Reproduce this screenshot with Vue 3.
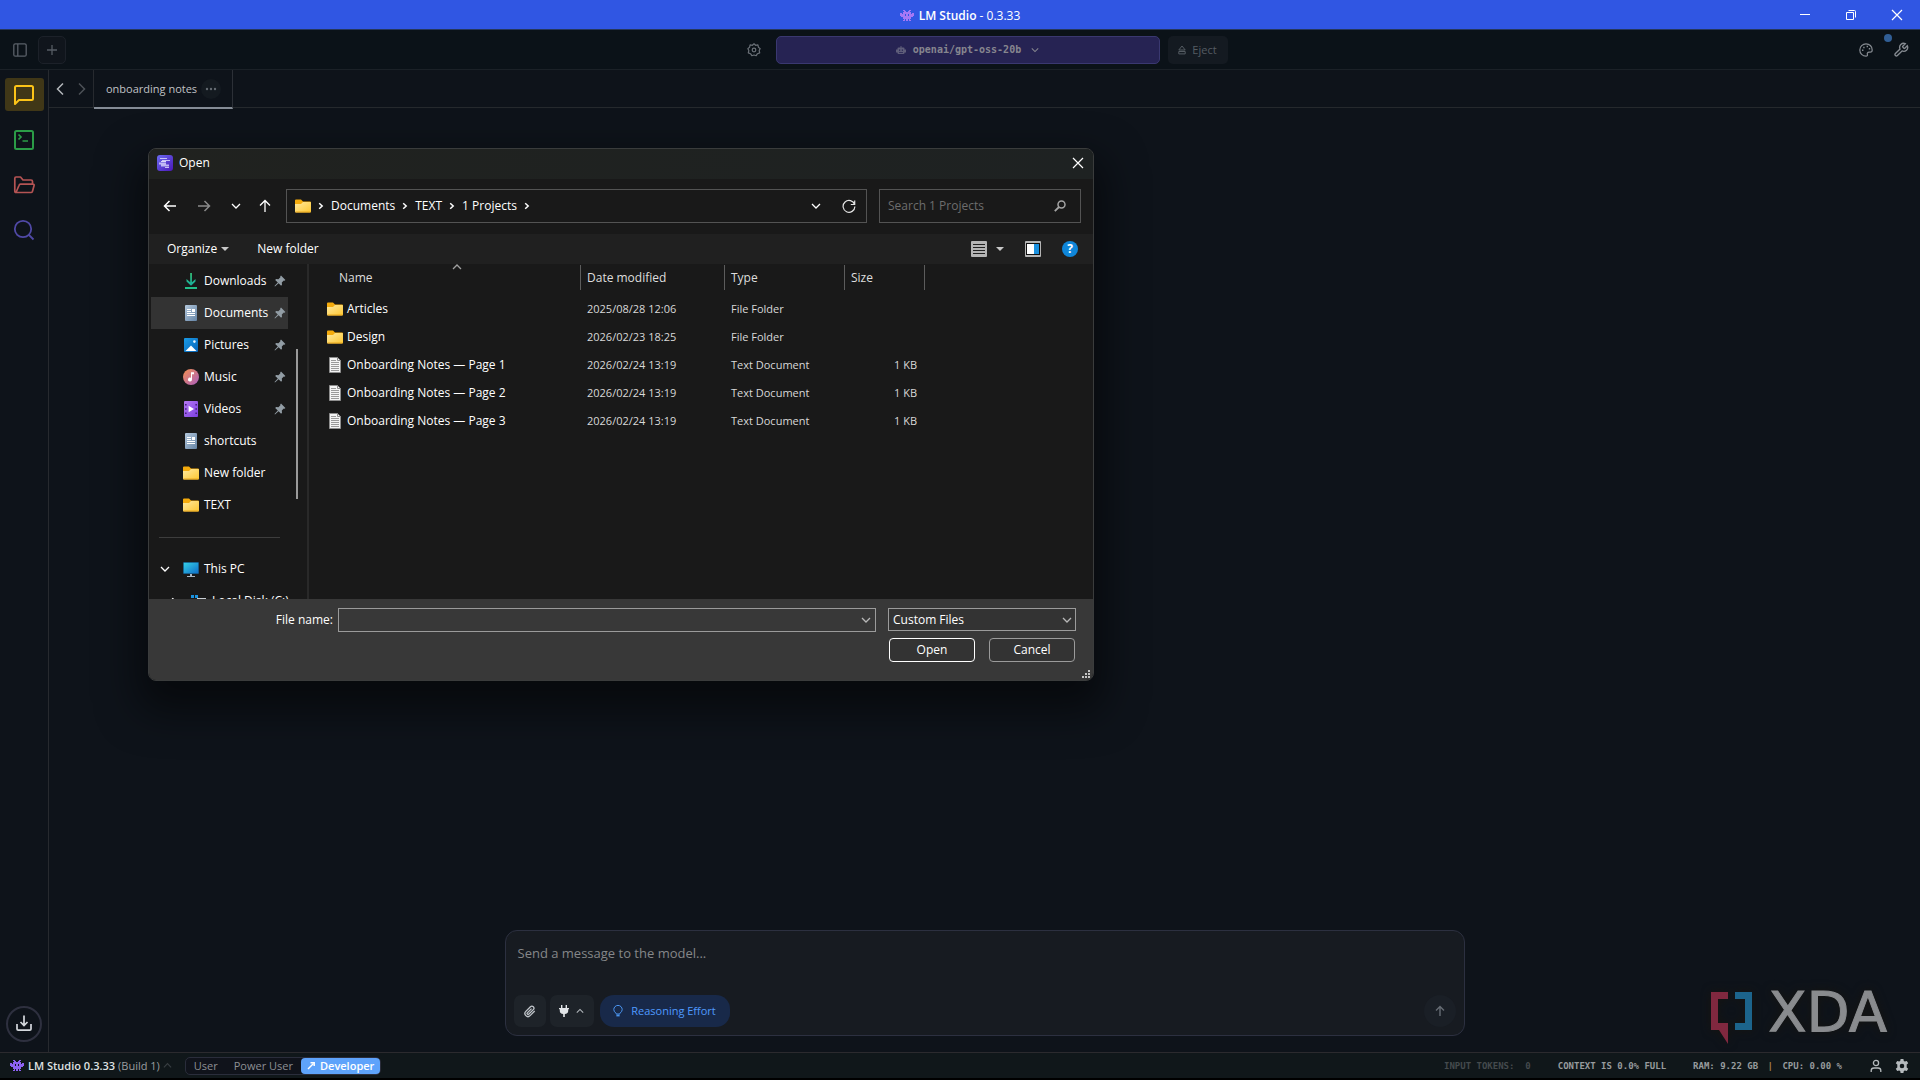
<script setup>
import { ref } from 'vue';

const fileName = ref('');
const search = ref('');
const message = ref('');
const fileType = ref('Custom Files');

const places = [
  { name: 'Downloads', icon: 'downloads', pinned: true },
  { name: 'Documents', icon: 'documents', pinned: true, active: true },
  { name: 'Pictures', icon: 'pictures', pinned: true },
  { name: 'Music', icon: 'music', pinned: true },
  { name: 'Videos', icon: 'videos', pinned: true },
  { name: 'shortcuts', icon: 'documents' },
  { name: 'New folder', icon: 'folder' },
  { name: 'TEXT', icon: 'folder' },
];

const files = [
  { name: 'Articles', icon: 'folder', date: '2025/08/28 12:06', type: 'File Folder', size: '' },
  { name: 'Design', icon: 'folder', date: '2026/02/23 18:25', type: 'File Folder', size: '' },
  { name: 'Onboarding Notes — Page 1', icon: 'text', date: '2026/02/24 13:19', type: 'Text Document', size: '1 KB' },
  { name: 'Onboarding Notes — Page 2', icon: 'text', date: '2026/02/24 13:19', type: 'Text Document', size: '1 KB' },
  { name: 'Onboarding Notes — Page 3', icon: 'text', date: '2026/02/24 13:19', type: 'Text Document', size: '1 KB' },
];

const crumbs = ['Documents', 'TEXT', '1 Projects'];
</script>

<template>
  <div class="app">
    <!-- Shared icons -->
    <svg class="sprite" width="0" height="0" aria-hidden="true">
      <defs>
        <linearGradient id="g-folder" x1="0" y1="0" x2="1" y2="1">
          <stop offset="0" stop-color="#ffe9a0" />
          <stop offset="1" stop-color="#fdc731" />
        </linearGradient>
        <linearGradient id="g-doc" x1="0" y1="0" x2="1" y2="1">
          <stop offset="0" stop-color="#b4c8dc" />
          <stop offset="1" stop-color="#6484a6" />
        </linearGradient>
        <linearGradient id="g-down" x1="0" y1="0" x2="0" y2="1">
          <stop offset="0" stop-color="#35c77b" />
          <stop offset="1" stop-color="#17ac9c" />
        </linearGradient>
        <linearGradient id="g-pic" x1="0" y1="0" x2="1" y2="1">
          <stop offset="0" stop-color="#1a9be6" />
          <stop offset="1" stop-color="#0864b8" />
        </linearGradient>
        <linearGradient id="g-music" x1="0" y1="0" x2="1" y2="1">
          <stop offset="0" stop-color="#f59150" />
          <stop offset="1" stop-color="#a85cc0" />
        </linearGradient>
        <linearGradient id="g-video" x1="0" y1="0" x2="1" y2="1">
          <stop offset="0" stop-color="#b578f2" />
          <stop offset="1" stop-color="#7b3fe0" />
        </linearGradient>
        <linearGradient id="g-pc" x1="0" y1="0" x2="1" y2="1">
          <stop offset="0" stop-color="#35d0e6" />
          <stop offset="1" stop-color="#0f6fc9" />
        </linearGradient>
        <linearGradient id="g-app" x1="0" y1="0" x2="1" y2="1">
          <stop offset="0" stop-color="#6b6bf0" />
          <stop offset="1" stop-color="#4a17b8" />
        </linearGradient>
      </defs>
      <symbol id="i-folder" viewBox="0 0 16 16">
        <path d="M0 2.500Q0 1.500 1 1.500H6L8 3.500H15Q16 3.500 16 4.500V7H0Z" fill="#f5ab0c" />
        <path d="M0 6H6L8 4H15.200Q16 4 16 5V13.500Q16 14.500 15 14.500H1Q0 14.500 0 13.500Z" fill="url(#g-folder)" />
        <path d="M.5 14H15.500" stroke="#e9a61c" />
      </symbol>
      <symbol id="i-text" viewBox="0 0 16 16">
        <path d="M2.500 .5H10.500L13.500 3.500V15.500H2.500Z" fill="#f4f4f4" stroke="#8e8e8e" />
        <path d="M10.500 .5V3.500H13.500" fill="none" stroke="#8e8e8e" />
        <path d="M4 3.500H9M4 5.500H12M4 7.500H12M4 9.500H12M4 11.500H12M4 13.500H12" stroke="#9a9a9a" />
      </symbol>
      <symbol id="i-documents" viewBox="0 0 16 16">
        <rect x="2" width="12" height="16" rx="1" fill="url(#g-doc)" />
        <path d="M4 4.500H8M4 6.500H8M4 8.500H12M4 10.500H12" stroke="#fff" />
        <rect x="9" y="4" width="3" height="3" fill="#fff" />
      </symbol>
      <symbol id="i-downloads" viewBox="0 0 16 16">
        <path d="M7.200 0h1.700v9.200l3.600-3.200v2.500L8 12.800 3.500 8.500V6l3.700 3.200Z" fill="url(#g-down)" />
        <rect x="2" y="14" width="12" height="2" fill="#22c08a" />
      </symbol>
      <symbol id="i-pictures" viewBox="0 0 16 16">
        <rect x="1" y="1" width="14" height="14" rx="1" fill="url(#g-pic)" />
        <path d="M2.500 14 8 8.400 13.500 14Z" fill="#fff" />
        <circle cx="11.400" cy="4.600" r="1.300" fill="#e8f4ff" />
      </symbol>
      <symbol id="i-music" viewBox="0 0 16 16">
        <circle cx="8" cy="8" r="8" fill="url(#g-music)" />
        <path d="M8 3.200h3v2H9v5.400a2 2 0 1 1-1-1.800Z" fill="#fff" />
      </symbol>
      <symbol id="i-videos" viewBox="0 0 16 16">
        <rect x="1" width="14" height="16" rx="1" fill="url(#g-video)" />
        <path d="M2 3h1.600v1.600H2ZM2 7.200h1.600v1.600H2ZM2 11.400h1.600V13H2ZM12.400 3H14v1.600h-1.600ZM12.400 7.200H14v1.600h-1.600ZM12.400 11.400H14V13h-1.600Z" fill="#45207e" />
        <path d="M5.600 4.800 11 8l-5.400 3.200Z" fill="#fff" />
      </symbol>
      <symbol id="i-pc" viewBox="0 0 16 16">
        <rect y="1" width="16" height="12" rx="1" fill="#14527e" />
        <rect x=".8" y="1.800" width="14.400" height="10.400" fill="url(#g-pc)" />
        <path d="M7 13h2v2h3v1H4v-1h3Z" fill="#a9b6c2" />
      </symbol>
      <symbol id="i-disk" viewBox="0 0 16 16">
        <path d="M6 5h9v6H1V7h5Z" fill="#c8ced3" />
        <path d="M0 2h3v3H0ZM4 2h3v3H4ZM0 6h3v2H0ZM4 6h3v2H4Z" fill="#1a93e0" />
      </symbol>
      <symbol id="i-pin" viewBox="0 0 12 12">
        <path d="M7 .6 11.400 5l-.8.8-.8-.2-2 2 .2 2.200-.9.900L4.600 8.200 1 11.400l-.5-.5L3.800 7.400 1.200 5l.9-.9 2.300.2 2-2-.2-.9Z" fill="#929da5" />
      </symbol>
      <symbol id="i-chevron" viewBox="0 0 10 10">
        <path d="M1 3l4 4 4-4" fill="none" stroke="currentColor" stroke-width="1.300" />
      </symbol>
      <symbol id="i-next" viewBox="0 0 6 8">
        <path d="M1.200 1.200 4.200 4 1.200 6.800" fill="none" stroke="currentColor" stroke-width="1.500" />
      </symbol>
      <symbol id="i-close" viewBox="0 0 12 12">
        <path d="M1 1l10 10M11 1 1 11" fill="none" stroke="currentColor" stroke-width="1.200" />
      </symbol>
      <symbol id="i-invader" viewBox="0 0 14 12">
        <path
          d="M3 0h2v1h1v1h2V1h1V0h2v1h-1v1h1v2h1V3h2v3h-1v1h-2v2h-1v1h1v1H9V9H8v2H6V9H5v2H3v-1h1V9H3V7H1V6H0V3h2v1h1V2h1V1H3ZM5 4v2h1V4ZM8 4v2h1V4Z"
          fill="currentColor"
          fill-rule="evenodd"
        />
      </symbol>
    </svg>

    <header class="titlebar">
      <div class="titlebar-name">
        <svg class="invader" width="14" height="12"><use href="#i-invader" /></svg>
        <span><b>LM Studio</b> - 0.3.33</span>
      </div>
      <div class="window-controls">
        <button aria-label="Minimize">
          <svg width="12" height="12"><path d="M1 5.500h10" stroke="#fff" /></svg>
        </button>
        <button aria-label="Restore">
          <svg width="12" height="12" fill="none" stroke="#fff">
            <path d="M1.500 3.500h7v7h-7ZM3.500 1.500h6q1 0 1 1v6" />
          </svg>
        </button>
        <button aria-label="Close">
          <svg width="12" height="12" color="#fff"><use href="#i-close" /></svg>
        </button>
      </div>
    </header>

    <div class="toolbar">
      <div class="toolbar-left">
        <button class="icon-button" aria-label="Toggle sidebar">
          <svg width="14" height="14" fill="none" stroke="#5a6068" stroke-width="1.300">
            <rect x=".8" y=".8" width="12.400" height="12.400" rx="1.500" />
            <path d="M4.800 1v12" />
          </svg>
        </button>
        <button class="new-button" aria-label="New chat">
          <svg width="12" height="12" stroke="#565c64" stroke-width="1.300"><path d="M6 1v10M1 6h10" /></svg>
        </button>
      </div>
      <div class="toolbar-center">
        <button class="icon-button" aria-label="Model settings">
          <svg width="14" height="14" viewBox="0 0 14 14" fill="none" stroke="#6a7077" stroke-width="1.200">
            <path d="M7 .8 8.600 2.300 10.900 1.900 11.400 4.200 13.200 5.600 12.200 7.600 12.700 9.900 10.500 10.700 9.200 12.700 7 12 4.800 12.700 3.500 10.700 1.300 9.900 1.800 7.600 .8 5.600 2.600 4.200 3.100 1.900 5.400 2.300Z" stroke-linejoin="round" />
            <circle cx="7" cy="7" r="1.800" />
          </svg>
        </button>
        <button class="model-button">
          <svg width="10" height="10" viewBox="0 0 10 10" fill="#5e5d7a">
            <path d="M4.500 1h1v1.500h2q1 0 1 1V4.500h1.500v3H8.500V8q0 1-1 1h-5q-1 0-1-1v-.5H0v-3h1.500v-1q0-1 1-1h2ZM3 4.500v1.200h1.200V4.500ZM5.800 4.500v1.200H7V4.500ZM3 7v.8h4V7Z" fill-rule="evenodd" />
          </svg>
          <span>openai/gpt-oss-20b</span>
          <svg width="8" height="8"><use href="#i-chevron" /></svg>
        </button>
        <button class="eject-button">
          <svg width="8" height="10" viewBox="0 0 8 10" fill="none" stroke="#555c63">
            <path d="M4 1 7.200 5H.8ZM.8 6.500h6.400v2.400H.8Z" />
          </svg>
          Eject
        </button>
      </div>
      <div class="toolbar-right">
        <button class="icon-button" aria-label="Theme">
          <svg width="14" height="14" viewBox="0 0 14 14" fill="none" stroke="#868b91" stroke-width="1.200">
            <path d="M7 .8a6.200 6.200 0 0 0 0 12.400c1.300 0 1.700-.8 1.400-1.700-.5-1.400.3-2.300 1.600-2.300h1.300c1.200 0 1.900-1 1.900-2.200C13.200 3.400 10.400 .8 7 .8Z" />
            <path d="M3 7.200h1.400M4.200 4.400h1.400M7.600 3.600h1.400M9.800 5.800h1.400" stroke-width="1.500" />
          </svg>
        </button>
        <button class="icon-button wrench" aria-label="Tools">
          <svg width="16" height="16" viewBox="0 0 24 24" fill="none" stroke="#868b91" stroke-width="2">
            <path d="M14.700 6.300a1 1 0 0 0 0 1.400l1.600 1.600a1 1 0 0 0 1.400 0l3.770-3.770a6 6 0 0 1-7.940 7.940l-6.910 6.910a2.120 2.120 0 0 1-3-3l6.910-6.910a6 6 0 0 1 7.940-7.940z" />
          </svg>
          <span class="dot"></span>
        </button>
      </div>
    </div>

    <div class="body">
      <nav class="rail">
        <button class="rail-item active" aria-label="Chat">
          <svg width="22" height="22" viewBox="0 0 22 22" fill="none" stroke="#fcc418" stroke-width="2">
            <path d="M2 20V3.500Q2 2 3.500 2h15Q20 2 20 3.500v11q0 1.500-1.500 1.500H6Z" stroke-linejoin="round" />
          </svg>
        </button>
        <button class="rail-item" aria-label="Developer">
          <svg width="22" height="22" viewBox="0 0 22 22" fill="none" stroke="#2b9c47" stroke-width="2">
            <rect x="2" y="2" width="18" height="18" rx="1.500" />
            <path d="M5.500 5.500 8 8 5.500 10.500M9.500 12h5.500" stroke-width="1.700" />
          </svg>
        </button>
        <button class="rail-item" aria-label="My models">
          <svg width="22" height="22" viewBox="0 0 22 22" fill="none" stroke="#b55454" stroke-width="1.700" stroke-linejoin="round">
            <path d="M3 18.500Q1.800 18.500 1.800 17V4.500Q1.800 3 3 3h4.500l2.500 3h8q1.500 0 1.500 1.500V10M3 18.500l3-7Q6.400 10.200 7.500 10.200h12.300q1.700 0 1.200 1.500l-1.500 5.500q-.4 1.300-1.600 1.300Z" />
          </svg>
        </button>
        <button class="rail-item" aria-label="Discover">
          <svg width="22" height="22" viewBox="0 0 22 22" fill="none" stroke="#5049a6" stroke-width="1.800">
            <circle cx="10" cy="10" r="8.200" />
            <path d="M15.500 15.500 20.500 20.500" />
          </svg>
        </button>
        <button class="download-button" aria-label="Downloads">
          <svg width="18" height="18" viewBox="0 0 18 18" fill="none" stroke="#d5d9de" stroke-width="1.700">
            <path d="M9 .5v10M5.500 7l3.500 3.500L12.500 7M2 9v5q0 1.200 1.200 1.200h11.600Q16 15.200 16 14V9" />
          </svg>
        </button>
      </nav>

      <main class="main">
        <div class="tabs">
          <div class="tab-nav">
            <button aria-label="Back"><svg width="8" height="14" fill="none" stroke="#b4b8bc" stroke-width="1.500"><path d="M7 1.500 1.500 7 7 12.500" /></svg></button>
            <button aria-label="Forward"><svg width="8" height="14" fill="none" stroke="#4c5157" stroke-width="1.500"><path d="M1 1.500 6.500 7 1 12.500" /></svg></button>
          </div>
          <div class="tab">
            <span>onboarding notes</span>
            <button class="tab-more" aria-label="Tab options">
              <svg width="12" height="4" fill="#666c73"><circle cx="2" cy="2" r="1.200" /><circle cx="6" cy="2" r="1.200" /><circle cx="10" cy="2" r="1.200" /></svg>
            </button>
          </div>
        </div>

        <div class="chat">
          <form class="composer" @submit.prevent>
            <textarea v-model="message" rows="1" aria-label="Message" placeholder="Send a message to the model..."></textarea>
            <div class="composer-actions">
              <button type="button" class="chip attach" aria-label="Attach file">
                <svg width="12" height="13" viewBox="0 0 24 24" fill="none" stroke="#c0c5ca" stroke-width="2.600">
                  <path d="M21.400 11.100l-9.200 9.200a6 6 0 0 1-8.500-8.500l9.200-9.200a4 4 0 0 1 5.700 5.700l-9.200 9.200a2 2 0 0 1-2.800-2.800l8.500-8.500" />
                </svg>
              </button>
              <button type="button" class="chip plug" aria-label="Integrations">
                <svg width="10" height="12" viewBox="0 0 10 12" fill="#e2e5e8">
                  <path d="M2 0h1.400v3h3.200V0H8v3h2v1.200H9.200V6Q9.200 8.500 5.800 9v3H4.200V9Q.8 8.500 .8 6V4.200H0V3h2Z" />
                </svg>
                <svg class="flip" width="8" height="8"><use href="#i-chevron" /></svg>
              </button>
              <button type="button" class="reasoning">
                <svg width="10" height="12" viewBox="0 0 10 12" fill="none" stroke="#4b95f0">
                  <path d="M3.200 9V8.400Q.8 6.800 .8 4.600a4.200 4.200 0 0 1 8.400 0Q9.200 6.800 6.800 8.400V9Z" />
                  <path d="M3.400 10.500h3.200" stroke-width="1.800" />
                </svg>
                Reasoning Effort
              </button>
              <button type="submit" class="send" aria-label="Send">
                <svg width="10" height="12" fill="none" stroke="#666c74" stroke-width="1.400"><path d="M5 11V1.500M1 5.500l4-4 4 4" /></svg>
              </button>
            </div>
          </form>
        </div>

        <div class="watermark">
          <svg width="44" height="54" viewBox="0 0 44 54">
            <path d="M1 1H18V8H8V32H18V53L9 39H1Z" fill="#80283f" />
            <path d="M25 1H42V39H25V32H35V8H25Z" fill="#1c648c" />
          </svg>
          <span>XDA</span>
        </div>
      </main>
    </div>

    <footer class="statusbar">
      <svg class="status-logo" width="14" height="12"><use href="#i-invader" /></svg>
      <b>LM Studio 0.3.33</b>
      <span class="build">(Build 1)</span>
      <svg class="flip faint" width="9" height="9"><use href="#i-chevron" /></svg>
      <div class="modes">
        <button>User</button>
        <button>Power User</button>
        <button class="selected">
          <svg width="9" height="9" fill="none" stroke="#fff" stroke-width="1.500"><path d="M1 8 6.500 2.500" /><path d="M3.500 1.800H7.200V5" /></svg>
          Developer
        </button>
      </div>
      <div class="stats">
        <span class="tokens">INPUT TOKENS: &nbsp;0</span>
        <span class="context">CONTEXT IS 0.0% FULL</span>
        <span class="system">RAM: 9.22 GB <i>|</i> CPU: 0.00 %</span>
      </div>
      <button class="status-icon" aria-label="Account">
        <svg width="12" height="14" fill="none" stroke="#b5babd" stroke-width="1.300">
          <circle cx="6" cy="4" r="2.600" />
          <path d="M1.200 13V11.500Q1.200 9 4 9h4q2.800 0 2.800 2.500V13" />
        </svg>
      </button>
      <button class="status-icon" aria-label="Settings">
        <svg width="14" height="14" viewBox="0 0 14 14" fill="#b5babd">
          <path d="M5.600 0h2.800l.4 1.900 1.100.6 1.900-.6 1.400 2.400-1.500 1.300v2.800l1.500 1.300-1.400 2.400-1.900-.6-1.100.6L8.400 14H5.600l-.4-1.900-1.100-.6-1.900.6L.8 9.700l1.500-1.300V5.600L.8 4.300 2.200 1.900l1.900.6 1.100-.6ZM7 4.700a2.300 2.300 0 1 0 0 4.600 2.300 2.300 0 0 0 0-4.600Z" fill-rule="evenodd" />
        </svg>
      </button>
    </footer>

    <!-- File picker window -->
    <section class="dialog" role="dialog" aria-label="Open">
      <header class="dialog-title">
        <svg width="16" height="16" fill="none" stroke="#d9d6fb">
          <rect width="16" height="16" rx="3" fill="url(#g-app)" stroke="none" />
          <path d="M3 3.500h7M5 5.500h8M8 12.500h4" opacity=".85" />
          <path d="M2 8.500h7M4 10.500h8" stroke-width="2" opacity=".8" />
          <path d="M4 6.500h5" />
        </svg>
        <span>Open</span>
        <button aria-label="Close dialog"><svg width="12" height="12"><use href="#i-close" /></svg></button>
      </header>

      <div class="dialog-nav">
        <div class="nav-buttons">
          <button aria-label="Back"><svg width="14" height="14" fill="none" stroke="#fff" stroke-width="1.500"><path d="M13 7H1.500M6.500 2l-5 5 5 5" /></svg></button>
          <button aria-label="Forward"><svg width="14" height="14" fill="none" stroke="#8a8a8a" stroke-width="1.500"><path d="M1 7h11.500M7.500 2l5 5-5 5" /></svg></button>
          <button aria-label="Recent"><svg width="10" height="10"><use href="#i-chevron" /></svg></button>
          <button aria-label="Up"><svg width="14" height="14" fill="none" stroke="#fff" stroke-width="1.300"><path d="M7 13V1.500M2 6.500l5-5 5 5" /></svg></button>
        </div>
        <div class="address">
          <svg width="16" height="16"><use href="#i-folder" /></svg>
          <svg width="6" height="8"><use href="#i-next" /></svg>
          <template v-for="crumb in crumbs" :key="crumb">
            <button>{{ crumb }}</button>
            <svg width="6" height="8"><use href="#i-next" /></svg>
          </template>
          <button class="address-drop" aria-label="Previous locations"><svg width="10" height="10"><use href="#i-chevron" /></svg></button>
          <button aria-label="Refresh">
            <svg width="14" height="14" fill="none" stroke="#e4e4e4" stroke-width="1.200"><path d="M12.600 5.500A5.900 5.900 0 1 0 12.900 7.500M12.700 1.500V5.500H8.800" /></svg>
          </button>
        </div>
        <label class="search">
          <input v-model="search" type="text" aria-label="Search 1 Projects" placeholder="Search 1 Projects" />
          <svg width="12" height="12" fill="none" stroke="#a4a4a4" stroke-width="1.500"><circle cx="7.500" cy="4.500" r="3.500" /><path d="M5 7 .8 11.200" stroke-width="1.800" /></svg>
        </label>
      </div>

      <div class="dialog-tools">
        <button>Organize <i class="triangle"></i></button>
        <button>New folder</button>
        <div class="view-tools">
          <button aria-label="View">
            <svg width="16" height="16"><rect width="16" height="16" rx="1" fill="#b4b4b4" /><path d="M2 3.500h12M2 6.500h12M2 9.500h12M2 12.500h12" stroke="#202020" /></svg>
            <i class="triangle"></i>
          </button>
          <button aria-label="Preview pane">
            <svg width="16" height="16"><rect width="16" height="16" rx="1" fill="#b4b4b4" /><rect x="1.500" y="2.500" width="13" height="11" fill="#fff" stroke="#111" /><rect x="9" y="3" width="5" height="10" fill="#1a90de" /></svg>
          </button>
          <button class="help" aria-label="Help">?</button>
        </div>
      </div>

      <div class="dialog-content">
        <aside class="places">
          <ul>
            <li v-for="place in places" :key="place.name" :class="{ active: place.active }">
              <svg width="16" height="16"><use :href="'#i-' + place.icon" /></svg>
              <span>{{ place.name }}</span>
              <svg v-if="place.pinned" class="pin" width="12" height="12"><use href="#i-pin" /></svg>
            </li>
            <li class="separator"><hr /></li>
            <li class="pc">
              <svg width="10" height="10"><use href="#i-chevron" /></svg>
              <svg width="16" height="16"><use href="#i-pc" /></svg>
              <span>This PC</span>
            </li>
            <li class="disk">
              <svg width="6" height="8"><use href="#i-next" /></svg>
              <svg width="16" height="16"><use href="#i-disk" /></svg>
              <span>Local Disk (C:)</span>
            </li>
          </ul>
          <div class="scrollbar"></div>
        </aside>

        <div class="listing">
          <svg class="sort" width="10" height="10"><use href="#i-chevron" /></svg>
          <table>
            <colgroup>
              <col class="c-name" />
              <col class="c-date" />
              <col class="c-type" />
              <col class="c-size" />
            </colgroup>
            <thead>
              <tr>
                <th><div>Name</div></th>
                <th><div>Date modified</div></th>
                <th><div>Type</div></th>
                <th><div>Size</div></th>
              </tr>
            </thead>
            <tbody>
              <tr v-for="file in files" :key="file.name">
                <td>
                  <div class="file">
                    <svg width="16" height="16"><use :href="'#i-' + file.icon" /></svg>
                    {{ file.name }}
                  </div>
                </td>
                <td>{{ file.date }}</td>
                <td>{{ file.type }}</td>
                <td class="size">{{ file.size }}</td>
              </tr>
            </tbody>
          </table>
        </div>
      </div>

      <form class="dialog-footer" @submit.prevent>
        <div class="fields">
          <label for="file-name">File name:</label>
          <div class="combo">
            <input id="file-name" v-model="fileName" type="text" />
            <button type="button" aria-label="Show recent files"><svg width="10" height="10"><use href="#i-chevron" /></svg></button>
          </div>
          <div class="select">
            <select v-model="fileType" aria-label="File type">
              <option>Custom Files</option>
            </select>
            <svg width="10" height="10"><use href="#i-chevron" /></svg>
          </div>
        </div>
        <div class="buttons">
          <button type="submit" class="primary">Open</button>
          <button type="button">Cancel</button>
        </div>
        <svg class="grip" width="8" height="8" fill="#c4c4c4">
          <path d="M6 0h2v2H6ZM6 3h2v2H6ZM6 6h2v2H6ZM3 3h2v2H3ZM3 6h2v2H3ZM0 6h2v2H0Z" />
        </svg>
      </form>
    </section>
  </div>
</template>

<style>
body {
  margin: 0;
  background: #000;
}
</style>

<style scoped>
* {
  box-sizing: border-box;
}

.app {
  position: relative;
  display: flex;
  flex-direction: column;
  min-height: 100vh;
  padding-bottom: 2px;
  font: 12px/16px 'Open Sans', 'Noto Sans', sans-serif;
  color: #fff;
  background: #000;
}

svg {
  display: block;
  flex: none;
}

.sprite {
  position: absolute;
}

button,
input,
select,
textarea {
  margin: 0;
  padding: 0;
  border: 0;
  background: none;
  color: inherit;
  font: inherit;
}

button {
  display: flex;
  align-items: center;
  justify-content: center;
  white-space: nowrap;
}

/* Title bar */
.titlebar {
  display: grid;
  grid-template-columns: 1fr auto 1fr;
  align-items: center;
  height: 30px;
  background: #3056e3;
  border-bottom: 1px solid #26375c;
}

.titlebar-name {
  grid-column: 2;
  display: flex;
  align-items: center;
  gap: 5px;
  padding-top: 2px;
}

.titlebar-name b {
  font-weight: 600;
}

.invader {
  color: #a478f5;
}

.window-controls {
  display: flex;
  justify-content: flex-end;
}

.window-controls button {
  width: 46px;
  height: 29px;
}

/* Toolbar */
.toolbar {
  display: grid;
  grid-template-columns: 1fr auto 1fr;
  align-items: center;
  height: 40px;
  background: #0b1218;
  border-bottom: 1px solid #1b2127;
}

.toolbar-left {
  display: flex;
  align-items: center;
  gap: 11px;
  padding-left: 13px;
}

.new-button {
  width: 28px;
  height: 28px;
  border: 1px solid #1c2129;
  border-radius: 5px;
  background: #10151c;
}

.toolbar-center {
  display: flex;
  align-items: center;
  gap: 8px;
  margin-left: 54px;
}

.model-button {
  gap: 7px;
  width: 384px;
  height: 28px;
  margin-left: 7px;
  border: 1px solid #3a3870;
  border-radius: 5px;
  background: #262353;
  color: #86868f;
  font: bold 10px/16px 'DejaVu Sans Mono', monospace;
}

.model-button span {
  margin-right: 3px;
}

.eject-button {
  gap: 6px;
  width: 60px;
  height: 28px;
  border-radius: 5px;
  background: #141a21;
  color: #555c63;
  font-size: 11px;
}

.toolbar-right {
  display: flex;
  align-items: center;
  justify-content: flex-end;
  gap: 20px;
  padding-right: 11px;
}

.wrench {
  position: relative;
}

.dot {
  position: absolute;
  top: -8px;
  left: -9px;
  width: 8px;
  height: 8px;
  border-radius: 50%;
  background: #315e95;
}

/* Left rail */
.body {
  display: flex;
  flex: 1;
  background: #0e131a;
}

.rail {
  display: flex;
  flex-direction: column;
  align-items: center;
  gap: 12px;
  width: 49px;
  padding: 8px 0 10px;
  border-right: 1px solid #272a2f;
}

.rail-item {
  width: 39px;
  height: 33px;
  border-radius: 3px;
}

.rail-item.active {
  background: #403717;
}

.download-button {
  width: 36px;
  height: 36px;
  margin-top: auto;
  border: 2px solid #2e303f;
  border-radius: 50%;
}

/* Main area */
.main {
  position: relative;
  display: flex;
  flex: 1;
  flex-direction: column;
}

.tabs {
  display: flex;
  height: 38px;
  border-bottom: 1px solid #25292d;
}

.tab-nav {
  display: flex;
  align-items: center;
  justify-content: space-between;
  width: 45px;
  padding: 0 7px;
  border-right: 1px solid #272a2f;
}

.tab {
  display: flex;
  align-items: center;
  gap: 4px;
  height: 39px;
  padding: 0 11px 0 12px;
  border-right: 1px solid #2c3037;
  border-bottom: 2px solid #858c96;
  color: #c0c2c5;
  font-size: 11px;
  font-weight: 500;
}

.tab-more {
  width: 20px;
  height: 20px;
  border-radius: 50%;
  background: #141a20;
}

.chat {
  display: flex;
  flex: 1;
  align-items: flex-end;
  justify-content: center;
  padding: 0 16px 16px;
}

.composer {
  width: 960px;
  padding: 12px 8px 8px;
  border: 1px solid #2c3040;
  border-radius: 12px;
  background: #171b21;
}

.composer textarea {
  display: block;
  width: 100%;
  height: 32px;
  margin-bottom: 20px;
  padding: 0 4px;
  color: #d0d4d8;
  font-size: 13px;
  line-height: 20px;
  resize: none;
}

.composer textarea::placeholder {
  color: #858789;
  opacity: 1;
}

.composer-actions {
  display: flex;
  align-items: center;
  gap: 6px;
}

.chip {
  height: 32px;
  border-radius: 7px;
  background: #1e2329;
}

.attach {
  width: 32px;
  margin-right: -2px;
}

.plug {
  gap: 7px;
  width: 44px;
  color: #b4b9be;
}

.flip {
  transform: rotate(180deg);
}

.reasoning {
  gap: 8px;
  width: 130px;
  height: 32px;
  border-radius: 14px;
  background: #182949;
  color: #4f9aff;
  font-size: 11px;
  font-weight: 500;
}

.send {
  width: 32px;
  height: 32px;
  margin-left: auto;
  border-radius: 50%;
  background: #1a1f26;
}

.watermark {
  position: absolute;
  right: 33px;
  bottom: 7px;
  display: flex;
  gap: 14px;
  color: #898b8e;
  font: 56px/42px 'DejaVu Sans', sans-serif;
  -webkit-text-stroke: 1px #898b8e;
  filter: drop-shadow(0 0 5px #16140f);
}

/* Status bar */
.statusbar {
  display: flex;
  align-items: center;
  height: 26px;
  padding: 0 11px 0 10px;
  border-top: 1px solid #2b2a2e;
  background: #10171a;
  font-size: 11px;
  white-space: nowrap;
}

.status-logo {
  margin-right: 4px;
  color: #8d62f2;
}

.statusbar b {
  color: #dfe1e2;
  font-weight: 600;
}

.build {
  margin: 0 3px;
  color: #9a9d9f;
}

.faint {
  color: #383e42;
}

.modes {
  display: flex;
  margin-left: 13px;
  border: 1px solid #2a2d3b;
  border-radius: 5px;
  background: #10131b;
  color: #8d8f94;
}

.modes button {
  padding: 0 8px;
}

.modes .selected {
  gap: 4px;
  padding: 0 6px;
  border-radius: 4px;
  background: #5ea3fb;
  color: #fff;
  font-weight: 600;
}

.stats {
  display: flex;
  gap: 27px;
  margin: 0 28px 0 auto;
  font: bold 9px/16px 'DejaVu Sans Mono', monospace;
}

.tokens {
  color: #444a4d;
}

.context,
.system {
  color: #979b9d;
}

.system i {
  margin: 0 4px;
  font-style: normal;
  color: #a8834d;
}

.status-icon + .status-icon {
  margin-left: 13px;
}

/* File picker */
.dialog {
  position: absolute;
  top: 148px;
  left: 148px;
  display: flex;
  flex-direction: column;
  width: 946px;
  overflow: hidden;
  border: 1px solid #3a3c3c;
  border-radius: 8px;
  background: #191919;
  box-shadow: 0 20px 40px 10px rgba(0, 0, 0, 0.5);
}

.dialog-title {
  display: flex;
  align-items: center;
  gap: 6px;
  height: 30px;
  padding: 0 9px 2px 8px;
  background: linear-gradient(90deg, #20221f, #1e2222);
}

.dialog-title button {
  margin-left: auto;
}

.dialog-nav {
  display: flex;
  align-items: center;
  gap: 12px;
  height: 55px;
  padding: 0 12px 1px 14px;
}

.nav-buttons {
  display: flex;
  align-items: center;
  gap: 20px;
  width: 111px;
}

.nav-buttons button:nth-child(4) {
  margin-left: -3px;
}

.address {
  display: flex;
  flex: 1;
  align-items: center;
  gap: 7px;
  height: 34px;
  padding: 0 10px 0 8px;
  border: 1px solid #535353;
}

.address-drop {
  margin: 0 14px 0 auto;
}

.search {
  display: flex;
  align-items: center;
  width: 202px;
  height: 34px;
  padding: 0 14px 0 8px;
  border: 1px solid #535353;
}

.search input {
  flex: 1;
  min-width: 0;
}

.search input::placeholder {
  color: #6d6d6d;
  opacity: 1;
}

.dialog-tools {
  display: flex;
  align-items: center;
  gap: 28px;
  height: 30px;
  padding: 0 15px 0 18px;
  background: #202020;
}

.dialog-tools button {
  gap: 4px;
}

.triangle {
  border: 4px solid transparent;
  border-top-color: #c8c8c8;
  border-bottom: 0;
}

.view-tools {
  display: flex;
  gap: 21px;
  margin-left: auto;
}

.view-tools button {
  gap: 9px;
}

.dialog-tools .help {
  width: 16px;
  height: 16px;
  border-radius: 50%;
  background: #0f86d9;
  font-weight: 700;
}

.dialog-content {
  display: flex;
  height: 335px;
  overflow: hidden;
}

.places {
  display: flex;
  width: 160px;
  padding: 1px 2px 0;
  border-right: 2px solid #292929;
}

.places ul {
  width: 137px;
  margin: 0;
  padding: 0;
  list-style: none;
  white-space: nowrap;
}

.places li {
  display: flex;
  align-items: center;
  gap: 5px;
  height: 32px;
  padding: 0 2px 0 32px;
}

.places li.active {
  background: #333;
}

.pin {
  margin-left: auto;
}

.places .separator {
  padding: 0 8px;
}

.separator hr {
  flex: 1;
  margin: 0;
  border: 0;
  border-top: 1px solid #3d3d3d;
}

.places .pc {
  padding-left: 9px;
}

.pc svg:first-child {
  margin-right: 8px;
}

.places .disk {
  padding-left: 20px;
}

.disk svg:first-child {
  margin-right: 9px;
}

.scrollbar {
  width: 2px;
  height: 150px;
  margin: 84px 0 0 8px;
  background: #9a9a9a;
}

.listing {
  position: relative;
  flex: 1;
  padding-top: 1px;
}

.sort {
  position: absolute;
  top: -2px;
  left: 143px;
  color: #a0a0a0;
  transform: rotate(180deg);
}

table {
  table-layout: fixed;
  width: 616px;
  border-collapse: collapse;
}

.c-name {
  width: 272px;
}

.c-date {
  width: 144px;
}

.c-type {
  width: 120px;
}

.c-size {
  width: 80px;
}

th {
  height: 30px;
  padding: 0;
  color: #dedede;
  font-weight: 400;
  text-align: left;
  vertical-align: top;
}

th div {
  padding: 5px 6px 4px;
  border-right: 1px solid #5c5c5c;
}

th:first-child div {
  padding-left: 30px;
}

td {
  height: 28px;
  padding: 0 6px;
  color: #d8d8d8;
  font-size: 11px;
}

td:first-child {
  padding-left: 18px;
  color: #fff;
  font-size: 12px;
}

td.size {
  padding-right: 8px;
  text-align: right;
}

.file {
  display: flex;
  align-items: center;
  gap: 4px;
}

.dialog-footer {
  position: relative;
  height: 81px;
  padding: 9px 17px 0 0;
  background: #383838;
}

.fields {
  display: flex;
  gap: 12px;
}

.fields label {
  width: 184px;
  margin-right: -7px;
  line-height: 24px;
  text-align: right;
}

.combo {
  display: flex;
  flex: 1;
  height: 24px;
  padding-right: 4px;
  border: 1px solid #9b9b9b;
  color: #b8b8b8;
}

.combo input {
  flex: 1;
  padding: 0 4px;
}

.select {
  position: relative;
  width: 188px;
  height: 23px;
  border: 1px solid #9b9b9b;
  background: #333;
}

.select select {
  width: 100%;
  height: 100%;
  padding: 0 4px;
  appearance: none;
}

.select svg {
  position: absolute;
  top: 6px;
  right: 3px;
  color: #b8b8b8;
  pointer-events: none;
}

.buttons {
  display: flex;
  justify-content: flex-end;
  gap: 14px;
  margin-top: 6px;
  padding-right: 1px;
}

.buttons button {
  width: 86px;
  height: 24px;
  border: 1px solid #9b9b9b;
  border-radius: 4px;
  background: #333;
}

.buttons .primary {
  border-color: #fff;
}

.grip {
  position: absolute;
  right: 3px;
  bottom: 2px;
}
</style>
